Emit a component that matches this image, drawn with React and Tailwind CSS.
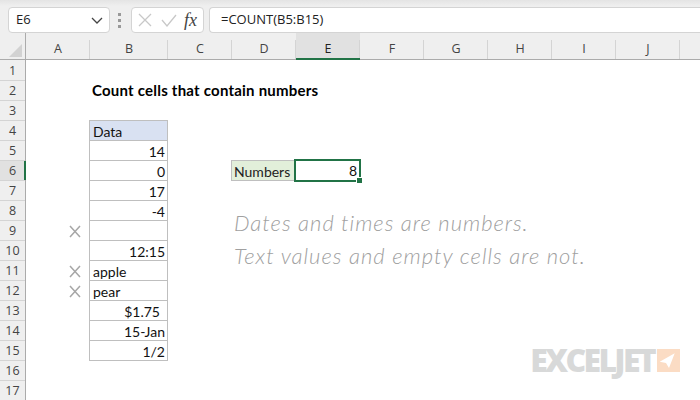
const COLS = [
  { l: 'A', w: 'w-[64px]' },
  { l: 'B', w: 'w-[78px]' },
  { l: 'C', w: 'w-[64px]' },
  { l: 'D', w: 'w-[64px]' },
  { l: 'E', w: 'w-[64px]', active: true },
  { l: 'F', w: 'w-[64px]' },
  { l: 'G', w: 'w-[64px]' },
  { l: 'H', w: 'w-[64px]' },
  { l: 'I', w: 'w-[64px]' },
  { l: 'J', w: 'w-[64px]' },
];

const ROWS = Array.from({ length: 17 }, (_, i) => i + 1);

const DATA = [
  { r: 4, t: 'Data', head: true },
  { r: 5, t: '14' },
  { r: 6, t: '0' },
  { r: 7, t: '17' },
  { r: 8, t: '-4' },
  { r: 9, t: '', x: true },
  { r: 10, t: '12:15' },
  { r: 11, t: 'apple', left: true, x: true },
  { r: 12, t: 'pear', left: true, x: true },
  { r: 13, t: '$1.75', pad: true },
  { r: 14, t: '15-Jan' },
  { r: 15, t: '1/2' },
];

const Cross = () => (
  <svg width="12" height="13" viewBox="0 0 12 13" fill="none" stroke="#a6a6a6" strokeWidth="1.5">
    <path d="M1 1 L11 12 M11 1 L1 12" />
  </svg>
);

function Toolbar() {
  return (
    <div className="h-[33px] bg-[#efefef] flex items-start pt-[7px] relative">
      <div className="absolute left-0 right-0 top-0 h-[6px] bg-gradient-to-b from-[#e4e4e4] to-[#efefef]" />
      <div className="relative ml-2 w-[102px] h-[26px] bg-white border border-[#d4d4d4] rounded-[4px] flex items-center justify-between pl-[7px] pr-[4px] text-[13px] text-[#222]">
        <span>E6</span>
        <svg width="16" height="16" viewBox="0 0 16 16" fill="none" stroke="#444" strokeWidth="1.3">
          <path d="M3 6 L8 11 L13 6" />
        </svg>
      </div>
      <div className="relative ml-[7px] w-[5px] h-[26px] flex flex-col items-center justify-center gap-[3px]">
        <span className="w-[3px] h-[3px] bg-[#999]" />
        <span className="w-[3px] h-[3px] bg-[#999]" />
        <span className="w-[3px] h-[3px] bg-[#999]" />
      </div>
      <div className="relative ml-[9px] w-[73px] h-[26px] bg-white border border-[#d4d4d4] rounded-[4px] flex items-center pl-[6px]">
        <svg width="14" height="14" viewBox="0 0 14 14" fill="none" stroke="#c8c8c8" strokeWidth="1.3">
          <path d="M1 1 L13 13 M13 1 L1 13" />
        </svg>
        <svg className="ml-[9px]" width="16" height="13" viewBox="0 0 16 13" fill="none" stroke="#c8c8c8" strokeWidth="1.3">
          <path d="M1 6 L6 12 L15 1" />
        </svg>
        <span className="ml-[7px] text-[18px] leading-none italic text-[#444] font-['Liberation_Serif',serif]">fx</span>
      </div>
      <div className="relative ml-[5px] flex-1 h-[26px] bg-white border-y border-l border-[#d4d4d4] rounded-l-[4px] flex items-center pl-[11px] text-[13px] text-[#222]">
        =COUNT(B5:B15)
      </div>
    </div>
  );
}

function ColHeader() {
  return (
    <div className="h-[27px] flex bg-[#efefef] border-b border-[#ababab] text-[12.5px] text-[#444]">
      <div className="w-[26px] shrink-0 border-r border-[#ababab] flex items-end justify-end pb-[2px] pr-[3px]">
        <svg width="13" height="13" viewBox="0 0 13 13">
          <path d="M13 0 V13 H0 Z" fill="#d2d2d2" />
        </svg>
      </div>
      {COLS.map((c) => (
        <div
          key={c.l}
          className={`${c.w} shrink-0 flex items-center justify-center relative pt-[7px] ${c.active ? 'bg-[#e1e1e1] text-[#222]' : ''}`}
        >
          {c.l}
          <span className="absolute right-0 bottom-0 w-px h-[19px] bg-[#d4d4d4]" />
          {c.active && <span className="absolute left-0 right-0 bottom-[-1px] h-[2px] bg-[#217346]" />}
        </div>
      ))}
      <div className="flex-1" />
    </div>
  );
}

function RowHeader() {
  return (
    <div className="w-[26px] shrink-0 bg-[#efefef] border-r border-[#ababab] pt-px text-[12.5px] text-[#444]">
      {ROWS.map((r) => (
        <div
          key={r}
          className={`h-5 flex items-center justify-center border-b border-[#d4d4d4] relative pt-[2px] ${r === 6 ? 'bg-[#e1e1e1]' : ''}`}
        >
          {r}
          {r === 6 && <span className="absolute right-[-1px] top-0 bottom-0 w-[2px] bg-[#217346]" />}
        </div>
      ))}
    </div>
  );
}

function Sheet() {
  return (
    <div className="flex-1 relative grid grid-cols-[63px_79px_64px_64px_64px_1fr] auto-rows-[20px] text-[14px] text-[#111] font-['Lato',sans-serif]">
      <div className="col-start-2 col-span-4 row-start-2 flex items-center pl-[3px] pt-px text-[15px] tracking-[0.22px] font-bold whitespace-nowrap text-black">
        Count cells that contain numbers
      </div>

      {DATA.map((d) => (
        <div
          key={d.r}
          className={`col-start-2 flex items-center border border-[#bfbfbf] -mb-px pt-px ${d.left ? 'justify-start pl-[3px]' : 'justify-end'} ${d.pad ? 'pr-[7px]' : 'pr-[2px]'} ${d.head ? 'bg-[#d9e1f2] justify-start pl-[3px]' : ''}`}
          style={{ gridRowStart: d.r }}
        >
          {d.t}
        </div>
      ))}

      {DATA.filter((d) => d.x).map((d) => (
        <div
          key={d.r}
          className="col-start-1 flex items-center justify-center pt-[3px] pl-[35px]"
          style={{ gridRowStart: d.r }}
        >
          <Cross />
        </div>
      ))}

      <div className="col-start-4 row-start-6 flex items-center bg-[#e2efda] border border-[#bfbfbf] -mb-px -ml-px pl-[2px] pt-px text-[#222]">
        Numbers
      </div>
      <div className="col-start-5 row-start-6 flex items-center justify-end pr-[3px] pt-px relative">
        8
        <span className="absolute left-[-2px] right-[-1px] top-[-1px] bottom-[-2px] border-[2px] border-[#217346]" />
        <span className="absolute right-[-2px] bottom-[-3px] w-[6px] h-[6px] bg-[#217346] border-l border-t border-white" />
      </div>

      <div className="col-start-4 col-span-3 row-start-8 row-span-2 pl-[2px] pt-[6px] text-[22px] leading-[33px] text-[#a0a0a0] italic font-['Lato',sans-serif] font-light whitespace-nowrap tracking-[1px]">
        <div>Dates and times are numbers.</div>
        <div>Text values and empty cells are not.</div>
      </div>

      <div className="absolute right-[20px] bottom-[28px] flex items-center gap-[3px]">
        <span className="text-[32px] leading-[24px] font-extrabold text-[#d8d9d9] font-['Open_Sans',sans-serif] tracking-[-2.7px]">EXCELJET</span>
        <svg width="23" height="23" viewBox="0 0 23 23">
          <rect width="23" height="23" fill="#fbdcc4" />
          <path d="M2.7 12.7 L17.7 4.3 L12 19 L9 14 Z" fill="#fff" />
        </svg>
      </div>
    </div>
  );
}

export default function App() {
  return (
    <div className="w-[700px] h-[400px] overflow-hidden bg-white flex flex-col font-['Open_Sans',sans-serif]">
      <Toolbar />
      <ColHeader />
      <div className="flex-1 flex overflow-hidden">
        <RowHeader />
        <Sheet />
      </div>
    </div>
  );
}
